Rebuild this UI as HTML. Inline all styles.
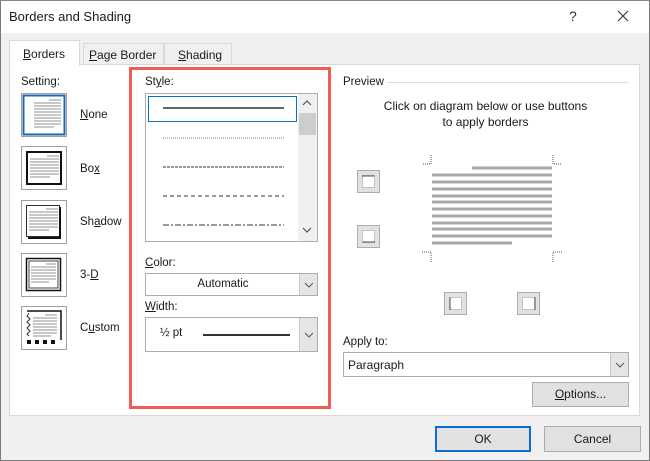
<!DOCTYPE html><html><head><style>
*{margin:0;padding:0;box-sizing:border-box}
body{width:650px;height:461px;overflow:hidden;background:#f0f0f0;font-family:"Liberation Sans",sans-serif;font-size:11.5px;color:#1a1a1a;position:relative}
.a{position:absolute}
.u{text-decoration:underline}
.btn{position:absolute;background:#e1e1e1;border:1px solid #adadad;text-align:center;font-size:12px}
.combo{position:absolute;background:#fff;border:1px solid #adadad}
.dd{position:absolute;right:0;top:0;bottom:0;width:18px;background:#e5e5e5;border-left:1px solid #c8c8c8}
</style></head><body>
<div class="a" style="left:0;top:0;width:650px;height:461px;border:1px solid #7a7a7a;border-top-color:#888"></div>
<div class="a" style="left:1px;top:1px;width:648px;height:32px;background:#fff"></div>
<div class="a" style="left:9px;top:9px;font-size:13px">Borders and Shading</div>
<div class="a" style="left:569px;top:8px;font-size:14px;color:#333">?</div>
<svg class="a" style="left:617px;top:10px" width="12" height="12"><path d="M1 1L11 11M11 1L1 11" stroke="#333" stroke-width="1.1"/></svg>
<div class="a" style="left:83px;top:43px;width:81px;height:22px;border:1px solid #d9d9d9;background:#f0f0f0"></div>
<div class="a" style="left:89px;top:48px;font-size:12px"><span class="u">P</span>age Border</div>
<div class="a" style="left:164px;top:43px;width:68px;height:22px;border:1px solid #d9d9d9;background:#f0f0f0"></div>
<div class="a" style="left:178px;top:48px;font-size:12px"><span class="u">S</span>hading</div>
<div class="a" style="left:9px;top:64px;width:631px;height:352px;background:#fff;border:1px solid #d9d9d9"></div>
<div class="a" style="left:9px;top:40px;width:71px;height:26px;background:#fff;border:1px solid #d9d9d9;border-bottom:none"></div>
<div class="a" style="left:23px;top:47px;font-size:12px"><span class="u">B</span>orders</div>
<div class="a" style="left:21px;top:76px">Setting:</div>
<svg class="a" style="left:21px;top:93px" width="47" height="45">
<rect x="0.5" y="0.5" width="45" height="43" fill="#fff" stroke="#a0a0a0"/>
<rect x="2.5" y="2.5" width="41" height="39" fill="none" stroke="#0a6ed1" stroke-width="2"/>
<rect x="2.5" y="2.5" width="41" height="39" fill="none" stroke="#555" stroke-dasharray="1 1" stroke-width="1"/>
<g stroke="#a8a8a8" stroke-width="1.3"><path d="M28 7h12M13 10h27M13 13h27M13 16h27M13 19h27M13 22h27M13 25h27M13 28h27M13 31h27M13 34h20"/></g></svg>
<div class="a" style="left:80px;top:109px"><span class="u">N</span>one</div>
<svg class="a" style="left:21px;top:146px" width="47" height="45">
<rect x="0.5" y="0.5" width="45" height="43" fill="#fff" stroke="#a0a0a0"/>
<rect x="6" y="6" width="34" height="32" fill="none" stroke="#111" stroke-width="2"/>
<g stroke="#a8a8a8" stroke-width="1.3"><path d="M26 10h12M9 13h29M9 16h29M9 19h29M9 22h29M9 25h29M9 28h29M9 31h20"/></g></svg>
<div class="a" style="left:80px;top:163px">Bo<span class="u">x</span></div>
<svg class="a" style="left:21px;top:200px" width="47" height="45">
<rect x="0.5" y="0.5" width="45" height="43" fill="#fff" stroke="#a0a0a0"/>
<rect x="5.5" y="5.5" width="33" height="31" fill="none" stroke="#333" stroke-width="1"/>
<path d="M39 7v31H7" fill="none" stroke="#111" stroke-width="2"/>
<g stroke="#a8a8a8" stroke-width="1.3"><path d="M25 9h12M8 12h29M8 15h29M8 18h29M8 21h29M8 24h29M8 27h29M8 30h20"/></g></svg>
<div class="a" style="left:80px;top:216px">Sh<span class="u">a</span>dow</div>
<svg class="a" style="left:21px;top:253px" width="47" height="45">
<rect x="0.5" y="0.5" width="45" height="43" fill="#fff" stroke="#a0a0a0"/>
<rect x="5.5" y="5.5" width="34" height="32" fill="none" stroke="#111" stroke-width="1.5"/>
<rect x="8" y="8" width="29" height="27" fill="none" stroke="#444" stroke-width="1"/>
<g stroke="#a8a8a8" stroke-width="1.3"><path d="M25 11h10M10 14h25M10 17h25M10 20h25M10 23h25M10 26h25M10 29h18"/></g></svg>
<div class="a" style="left:80px;top:269px">3-<span class="u">D</span></div>
<svg class="a" style="left:21px;top:306px" width="47" height="45">
<rect x="0.5" y="0.5" width="45" height="43" fill="#fff" stroke="#a0a0a0"/>
<path d="M6 5h34v29" fill="none" stroke="#111" stroke-width="1.5"/>
<path d="M8 7l-2 3l3 3l-3 3l3 3l-3 3l3 3l-3 3l2 2" fill="none" stroke="#333" stroke-width="1"/>
<g fill="#111"><rect x="6" y="34" width="4" height="4"/><rect x="14" y="34" width="4" height="4"/><rect x="22" y="34" width="4" height="4"/><rect x="30" y="34" width="4" height="4"/></g>
<g stroke="#a8a8a8" stroke-width="1.3"><path d="M24 9h12M12 12h24M12 15h24M12 18h24M12 21h24M12 24h24M12 27h24M12 30h18"/></g></svg>
<div class="a" style="left:80px;top:322px">C<span class="u">u</span>stom</div>
<div class="a" style="left:129px;top:67px;width:202px;height:342px;border:3px solid #f25c54"></div>
<div class="a" style="left:145px;top:76px">St<span class="u">y</span>le:</div>
<div class="a" style="left:145px;top:93px;width:173px;height:149px;border:1px solid #adadad;background:#fff"></div>
<div class="a" style="left:148px;top:96px;width:149px;height:26px;border:1px solid #0a6ed1"></div>
<svg class="a" style="left:145px;top:93px" width="173" height="149">
<path d="M18 15h121" stroke="#333" stroke-width="1.5"/>
<path d="M18 45h121" stroke="#aaa" stroke-width="1.5" stroke-dasharray="1 1"/>
<path d="M18 74h121" stroke="#333" stroke-width="1" stroke-dasharray="3 1"/>
<path d="M18 103h121" stroke="#333" stroke-width="1" stroke-dasharray="4 3"/>
<path d="M18 132h121" stroke="#333" stroke-width="1" stroke-dasharray="6 2 2 2"/>
<rect x="153" y="1" width="19" height="147" fill="#f0f0f0"/>
<rect x="154" y="20" width="17" height="22" fill="#cdcdcd"/>
<path d="M158 12l4-4l4 4M158 135l4 4l4-4" fill="none" stroke="#555" stroke-width="1.2"/>
</svg>
<div class="a" style="left:145px;top:257px"><span class="u">C</span>olor:</div>
<div class="combo" style="left:145px;top:273px;width:173px;height:23px"><div class="a" style="left:0;width:154px;text-align:center;top:4px">Automatic</div><div class="dd"><svg width="18" height="21"><path d="M5 9l4 4l4-4" fill="none" stroke="#555"/></svg></div></div>
<div class="a" style="left:145px;top:301px"><span class="u">W</span>idth:</div>
<div class="combo" style="left:145px;top:317px;width:173px;height:35px"><div class="a" style="left:14px;top:9px">½ pt</div><div class="a" style="left:57px;top:16px;width:87px;height:1.5px;background:#333"></div><div class="dd"><svg width="18" height="33"><path d="M5 15l4 4l4-4" fill="none" stroke="#555"/></svg></div></div>
<div class="a" style="left:343px;top:76px">Preview</div>
<div class="a" style="left:387px;top:82px;width:241px;height:1px;background:#dcdcdc"></div>
<div class="a" style="left:343px;top:98px;width:285px;text-align:center;line-height:16px;font-size:12px">Click on diagram below or use buttons<br>to apply borders</div>
<svg class="a" style="left:350px;top:150px" width="240" height="170">
<g fill="none" stroke="#555" stroke-dasharray="1 1"><path d="M81 5v9h-9M203 5v9h9M72 102h9v10M212 102h-9v10"/></g>
<g stroke="#a8a8a8" stroke-width="3"><path d="M122 18h80M82 25h120M82 32h120M82 39h120M82 46h120M82 52h120M82 59h120M82 66h120M82 73h120M82 79h120M82 86h120M82 93h80"/></g>
<g><rect x="7.5" y="20.5" width="22" height="22" fill="#e1e1e1" stroke="#adadad"/><rect x="12.5" y="25.5" width="12" height="12" fill="#fff" stroke="#999" stroke-dasharray="1 1"/><path d="M12 26h13" stroke="#555"/>
<rect x="7.5" y="75.5" width="22" height="22" fill="#e1e1e1" stroke="#adadad"/><rect x="12.5" y="80.5" width="12" height="12" fill="#fff" stroke="#999" stroke-dasharray="1 1"/><path d="M12 92h13" stroke="#555"/>
<rect x="94.5" y="142.5" width="22" height="22" fill="#e1e1e1" stroke="#adadad"/><rect x="99.5" y="147.5" width="12" height="12" fill="#fff" stroke="#999" stroke-dasharray="1 1"/><path d="M100 147v13" stroke="#555"/>
<rect x="167.5" y="142.5" width="22" height="22" fill="#e1e1e1" stroke="#adadad"/><rect x="172.5" y="147.5" width="12" height="12" fill="#fff" stroke="#999" stroke-dasharray="1 1"/><path d="M185 147v13" stroke="#555"/></g>
</svg>
<div class="a" style="left:343px;top:336px">Apply to:</div>
<div class="combo" style="left:343px;top:352px;width:286px;height:25px"><div class="a" style="left:4px;top:5px;font-size:12px">Paragraph</div><div class="dd"><svg width="18" height="23"><path d="M5 10l4 4l4-4" fill="none" stroke="#555"/></svg></div></div>
<div class="btn" style="left:532px;top:382px;width:97px;height:25px;line-height:23px"><span class="u">O</span>ptions...</div>
<div class="btn" style="left:435px;top:426px;width:96px;height:26px;line-height:24px;border:1px solid #0a6ed1;box-shadow:inset 0 0 0 1px #0a6ed1">OK</div>
<div class="btn" style="left:544px;top:426px;width:97px;height:26px;line-height:24px">Cancel</div>
</body></html>
